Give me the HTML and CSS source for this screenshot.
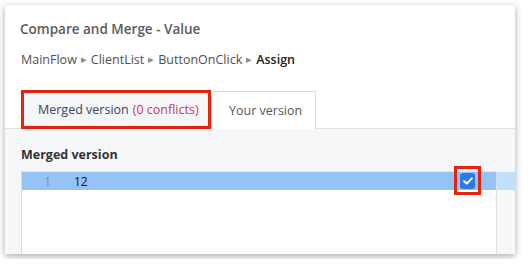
FILE: index.html
```html
<!DOCTYPE html>
<html>
<head>
<meta charset="utf-8">
<link rel="stylesheet" href="styles.css">
</head>
<body>
<div class="panel">
  <div class="head">
    <div class="title">Compare and Merge - Value</div>
    <div class="crumbs">
      <span>MainFlow</span><span class="sep">&#9656;</span><span>ClientList</span><span class="sep">&#9656;</span><span>ButtonOnClick</span><span class="sep">&#9656;</span><span class="cur">Assign</span>
    </div>
  </div>
  <div class="tabs">
    <div class="tab active">Merged version <span class="conf">(0 conflicts)</span></div>
    <div class="tab second">Your version</div>
  </div>
  <div class="body">
    <div class="label">Merged version</div>
    <div class="panes">
      <div class="editor">
        <div class="line hl">
          <span class="num">1</span><span class="code">12</span>
          <span class="mark"><span class="check"><svg width="10" height="8" viewBox="0 0 10 8"><path d="M1.2 4.2 L3.8 6.6 L8.8 1.4" fill="none" stroke="#fff" stroke-width="2" stroke-linecap="round" stroke-linejoin="round"/></svg></span></span>
        </div>
      </div>
      <div class="side">
        <div class="side-hl"></div>
      </div>
    </div>
  </div>
</div>
</body>
</html>
```
FILE: styles.css
```css
html, body { margin: 0; padding: 0; background: #fff; }
body { font-family: "Open Sans", "Noto Sans", sans-serif; }
.panel {
  margin: 5px;
  width: 510px;
  height: 249px;
  background: #fff;
  box-shadow: 0 2px 7px rgba(0,0,0,0.35);
  overflow: hidden;
  display: flex;
  flex-direction: column;
}
.head { padding: 14px 15px 0 15px; }
.title { font-size: 13.5px; font-weight: 600; color: #5a5a5a; line-height: 20px; }
.crumbs { margin-top: 11px; font-size: 12.5px; color: #505050; line-height: 20px; padding-left: 1px; }
.crumbs .sep { font-size: 10.5px; color: #8a8a8a; margin: 0 4px 0 4px; position: relative; top: -1px; }
.crumbs .cur { font-weight: 600; color: #222; }
.tabs {
  margin-top: 20px;
  display: flex;
  padding-left: 16px;
  border-bottom: 1px solid #e2e3e5;
  height: 38px;
}
.tab {
  box-sizing: border-box;
  font-size: 12.5px;
  color: #555;
  white-space: nowrap;
  display: flex;
  align-items: center;
  background: #fff;
}
.tab.second {
  width: 105px;
  padding-left: 18px;
  border-top: 1px solid #dcdcdc;
  border-right: 1px solid #dcdcdc;
  margin-top: 1px;
  margin-bottom: -1px;
}
.tab.active {
  width: 190px;
  background: #f5f6f8;
  border: 3px solid #e8230c;
  margin-top: 0;
  margin-bottom: -1px;
  padding-left: 14px;
  color: #3b4560;
}
.conf { color: #c8395a; margin-left: 4px; }
.body { flex: 1; background: #f6f7f9; padding: 0 0 0 16px; display: flex; flex-direction: column; }
.label { margin-top: 17px; font-size: 12.5px; font-weight: 700; color: #333; line-height: 18px; }
.panes { margin-top: 7px; flex: 1; display: flex; }
.editor {
  width: 474px;
  background: #fff;
  border-top: 1px solid #e6e6e6;
  border-left: 1px solid #dedede;
  border-right: 1px solid #dedede;
}
.line { position: relative; display: flex; align-items: center; height: 18px; font-family: "Open Sans", "Noto Sans", sans-serif; font-size: 12px; }
.line.hl { background: #96c3f7; }
.num { width: 29px; text-align: right; color: #8a8a8a; }
.code { margin-left: 23px; color: #111; }
.mark {
  position: absolute;
  left: 432px;
  top: -6px;
  width: 21px;
  height: 23px;
  border: 3px solid #e8230c;
  display: flex;
  align-items: center;
  justify-content: center;
}
.check {
  width: 15px; height: 16px;
  background: #2a7be6;
  border-radius: 3px;
  display: flex; align-items: center; justify-content: center;
}
.side { flex: 1; }
.side-hl { height: 18px; margin-top: 1px; background: #c4dffb; }
```
